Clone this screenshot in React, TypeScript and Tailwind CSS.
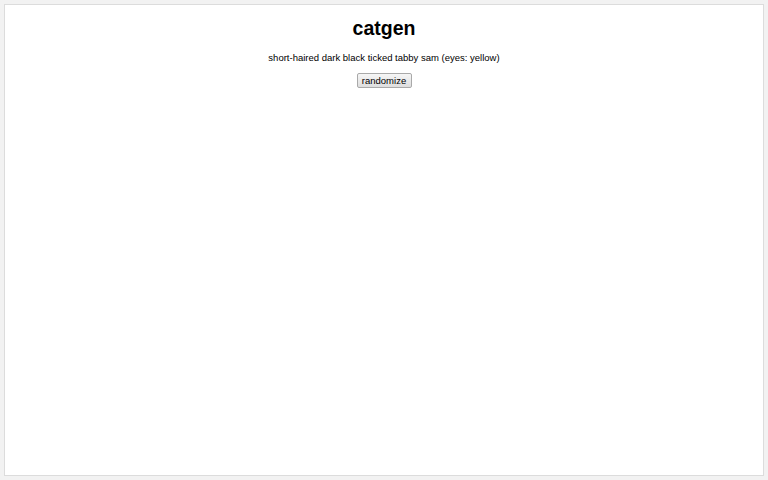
export default function App() {
  return (
    <div className="h-screen w-full bg-[#f2f2f2] p-1 font-['Liberation_Sans',Arial,sans-serif] text-black">
      <div className="flex h-full flex-col items-center border border-[#dcdcdc] bg-white pt-[11px]">
        <h1 className="text-[19.5px] font-bold leading-[24px]">catgen</h1>
        <p className="mt-[12px] text-[9.5px] leading-[12px]">
          short-haired dark black ticked tabby sam (eyes: yellow)
        </p>
        <button className="mt-[9px] h-[15px] w-[55px] rounded-[2px] border border-[#a9a9a9] bg-gradient-to-b from-[#f6f6f6] to-[#dedede] text-[9.5px] leading-[12px]">
          randomize
        </button>
      </div>
    </div>
  );
}
